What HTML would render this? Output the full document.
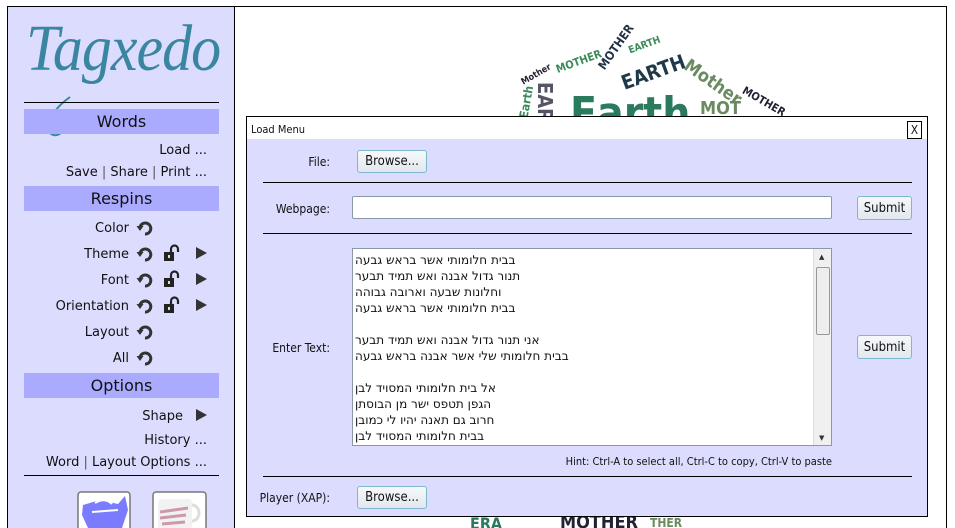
<!DOCTYPE html>
<html><head><meta charset="utf-8"><style>
*{margin:0;padding:0;box-sizing:border-box}
html,body{width:955px;height:528px;overflow:hidden}
body{background:#fff;position:relative;font-family:"DejaVu Sans","Liberation Sans",sans-serif;color:#111}
.a{position:absolute}
#frame{left:7px;top:6px;width:940px;height:530px;border:1px solid #000;border-bottom:none}
#left{left:8px;top:7px;width:227px;height:521px;background:#dcdcfe;border-right:1px solid #000}
.bar{position:absolute;left:24px;width:195px;height:25px;background:#aaaaff;font-size:16px;text-align:center;line-height:26px;color:#111}
.r{position:absolute;right:0;font-size:13px;white-space:nowrap;line-height:16px}
.hr{position:absolute;height:1px;background:#000}
.lbl{position:absolute;font-size:12px;text-align:right;line-height:14px;font-family:"DejaVu Sans Condensed","DejaVu Sans",sans-serif}
.btn{position:absolute;border:1px solid #7fb8c8;border-radius:3px;background:linear-gradient(#f6f8fa,#e2e8ef);font-size:13px;text-align:center;font-family:"DejaVu Sans Condensed","DejaVu Sans",sans-serif}
.tl div{height:16px;direction:rtl;text-align:left;white-space:nowrap}
.w{position:absolute;font-family:"DejaVu Sans Condensed","Liberation Sans Narrow",sans-serif;white-space:nowrap;font-weight:bold}
</style></head><body>
<div class="a" id="frame"></div>
<div class="a" id="left"></div>
<div class="a" style="left:26px;top:14px;font-family:'Liberation Serif',serif;font-style:italic;font-size:60px;color:#3a86a0;letter-spacing:-1px;transform:scaleY(1.1)">Tagxedo</div>
<svg class="a" style="left:40px;top:95px" width="60" height="45"><path d="M30 2 Q5 20 10 38 Q18 45 28 30" fill="none" stroke="#3a86a0" stroke-width="2"/></svg>
<div class="hr" style="left:24px;top:102px;width:195px"></div>
<div class="bar" style="top:109px">Words</div>
<div class="bar" style="top:186px">Respins</div>
<div class="bar" style="top:373px">Options</div>
<div class="hr" style="left:24px;top:475px;width:195px"></div>
<div class="a" style="left:0;top:0;width:207px;height:528px">
<div class="r" style="top:143px">Load ...</div>
<div class="r" style="top:165px">Save <span style="color:#555">|</span> Share <span style="color:#555">|</span> Print ...</div>
<div class="r" style="top:409px;right:24px">Shape</div>
<div class="r" style="top:433px">History ...</div>
<div class="r" style="top:455px">Word <span style="color:#555">|</span> Layout Options ...</div>
</div>
<div class="a" style="left:0;top:0;width:129px">
<div class="r" style="top:221px">Color</div>
<div class="r" style="top:247px">Theme</div>
<div class="r" style="top:273px">Font</div>
<div class="r" style="top:299px">Orientation</div>
<div class="r" style="top:325px">Layout</div>
<div class="r" style="top:351px">All</div>
</div>
<svg class="a" style="left:0;top:0" width="235" height="528">
<defs>
<g id="rf"><path d="M3 7 A5.5 5.5 0 1 1 8 14" fill="none" stroke="#333" stroke-width="3"/><path d="M-0.5 6 L6.5 6 L3 11 Z" fill="#333"/></g>
<g id="lk"><rect x="0" y="6" width="10" height="9" fill="#222"/><path d="M7 7 V3 A3.5 3.5 0 0 1 14 3 V6" fill="none" stroke="#222" stroke-width="2.2"/><rect x="4" y="9" width="2" height="3" fill="#ddd"/></g>
<path id="ar" d="M0 0 L11 6 L0 12 Z" fill="#333"/>
</defs>
<use href="#rf" x="137" y="220"/>
<use href="#rf" x="137" y="246"/><use href="#lk" x="164" y="246"/><use href="#ar" x="196" y="247"/>
<use href="#rf" x="137" y="272"/><use href="#lk" x="164" y="272"/><use href="#ar" x="196" y="273"/>
<use href="#rf" x="137" y="298"/><use href="#lk" x="164" y="298"/><use href="#ar" x="196" y="299"/>
<use href="#rf" x="137" y="324"/>
<use href="#rf" x="137" y="350"/>
<use href="#ar" x="196" y="409"/>
<rect x="78" y="492" width="52" height="40" rx="3" fill="#fff" stroke="#777" stroke-width="1.5"/>
<path d="M83 505 L100 500 L118 504 L125 496 L128 510 L122 528 L88 528 L82 515 Z" fill="#7b7bff"/>
<path d="M95 503 Q105 497 112 504 M92 512 L118 510" stroke="#fff" stroke-width="2" fill="none"/>
<rect x="153" y="492" width="53" height="40" rx="3" fill="#fff" stroke="#777" stroke-width="1.5"/>
<rect x="158" y="499" width="34" height="30" rx="3" fill="#f2f2f2"/>
<path d="M192 505 a7 8 0 0 1 0 16" fill="none" stroke="#ddd" stroke-width="3"/>
<path d="M160 512 L188 508 M160 518 L186 515 M162 524 L185 522" stroke="#c9a" stroke-width="3"/>
</svg>
<div class="w" style="left:620px;top:60px;font-size:20px;color:#1e3a4a;transform:rotate(-20deg)">EARTH</div>
<div class="w" style="left:555px;top:55px;font-size:11px;color:#3a8a5a;transform:rotate(-20deg)">MOTHER</div>
<div class="w" style="left:590px;top:40px;font-size:12px;color:#234;transform:rotate(-55deg)">MOTHER</div>
<div class="w" style="left:628px;top:40px;font-size:10px;color:#3a8a5a;transform:rotate(-20deg)">EARTH</div>
<div class="w" style="left:680px;top:72px;font-size:18px;color:#6a8a60;transform:rotate(35deg)">Mother</div>
<div class="w" style="left:740px;top:95px;font-size:11px;color:#223;transform:rotate(30deg)">MOTHER</div>
<div class="w" style="left:570px;top:88px;font-size:44px;color:#2a7a5e">Earth</div>
<div class="w" style="left:525px;top:90px;font-size:20px;color:#556;transform:rotate(90deg)">EAR</div>
<div class="w" style="left:700px;top:98px;font-size:18px;color:#6a8a60">MOT</div>
<div class="w" style="left:520px;top:70px;font-size:9px;color:#223;transform:rotate(-30deg)">Mother</div>
<div class="w" style="left:510px;top:95px;font-size:12px;color:#3a8a5a;transform:rotate(-80deg)">Earth</div>
<div class="w" style="left:470px;top:514px;font-size:16px;color:#2a7a5e">ERA</div>
<div class="w" style="left:560px;top:512px;font-size:18px;color:#223">MOTHER</div>
<div class="w" style="left:650px;top:516px;font-size:12px;color:#6a8a60">THER</div>
<div class="a" style="left:246px;top:116px;width:682px;height:401px;border:1px solid #000;background:#dcdcfe">
<div style="height:22px;background:#fff;font-size:11px;line-height:26px;padding-left:4px;font-family:'DejaVu Sans Condensed',sans-serif">Load Menu</div>
<div class="a" style="left:660px;top:4px;width:15px;height:18px;border:1px solid #000;font-size:12px;text-align:center;line-height:16px;background:#fff;font-family:'DejaVu Sans Condensed',sans-serif">X</div>
</div>
<div class="lbl" style="left:250px;width:80px;top:155px">File:</div>
<div class="btn" style="left:357px;top:150px;width:70px;height:23px;line-height:22px">Browse...</div>
<div class="hr" style="left:263px;top:182px;width:649px"></div>
<div class="lbl" style="left:250px;width:80px;top:202px">Webpage:</div>
<div class="a" style="left:352px;top:196px;width:480px;height:23px;background:#fff;border:1px solid #8a98a8;border-radius:2px"></div>
<div class="btn" style="left:857px;top:196px;width:55px;height:24px;line-height:23px">Submit</div>
<div class="hr" style="left:263px;top:233px;width:649px"></div>
<div class="lbl" style="left:250px;width:80px;top:341px">Enter Text:</div>
<div class="a" style="left:352px;top:248px;width:480px;height:198px;background:#fff;border:1px solid #8a98a8"></div>
<div class="a" style="left:813px;top:249px;width:18px;height:196px;background:#f0f0f0;border-left:1px solid #ddd">
<div class="a" style="left:2px;top:18px;width:14px;height:68px;border:1px solid #999;border-radius:2px;background:#eee"></div>
<div class="a" style="left:5px;top:4px;font-size:7px;color:#333">▲</div>
<div class="a" style="left:5px;top:185px;font-size:7px;color:#333">▼</div>
</div>
<div class="a tl" style="left:355px;top:252px;width:300px;font-size:12px;line-height:16px;font-family:'DejaVu Sans',sans-serif">
<div>בבית חלומותי אשר בראש גבעה</div>
<div>תנור גדול אבנה ואש תמיד תבער</div>
<div>וחלונות שבעה וארובה גבוהה</div>
<div>בבית חלומותי אשר בראש גבעה</div>
<div></div>
<div>אני תנור גדול אבנה ואש תמיד תבער</div>
<div>בבית חלומותי שלי אשר אבנה בראש גבעה</div>
<div></div>
<div>אל בית חלומותי המסויד לבן</div>
<div>הגפן תטפס ישר מן הבוסתן</div>
<div>חרוב גם תאנה יהיו לי כמובן</div>
<div>בבית חלומותי המסויד לבן</div>
</div>
<div class="btn" style="left:857px;top:335px;width:55px;height:24px;line-height:23px">Submit</div>
<div class="a" style="left:432px;width:400px;top:455px;font-size:11px;text-align:right;font-family:'DejaVu Sans Condensed',sans-serif">Hint: Ctrl-A to select all, Ctrl-C to copy, Ctrl-V to paste</div>
<div class="hr" style="left:263px;top:476px;width:649px"></div>
<div class="lbl" style="left:250px;width:80px;top:491px">Player (XAP):</div>
<div class="btn" style="left:357px;top:486px;width:70px;height:23px;line-height:22px">Browse...</div>
</body></html>
